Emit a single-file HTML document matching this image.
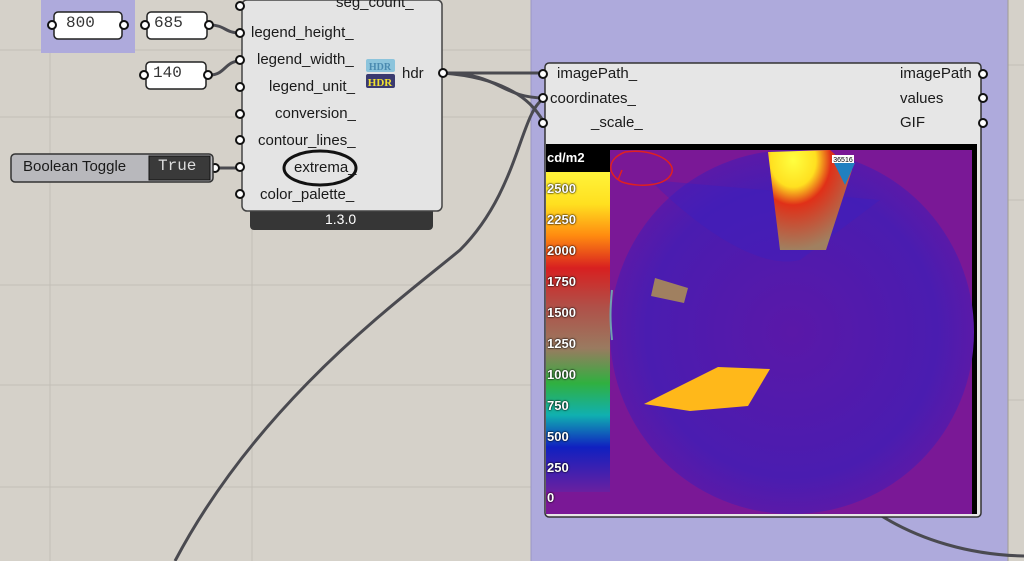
<!DOCTYPE html>
<html><head><meta charset="utf-8"><style>
html,body{margin:0;padding:0;width:1024px;height:561px;overflow:hidden;background:#d5d1c9;font-family:"Liberation Sans","DejaVu Sans",sans-serif}
.abs{position:absolute}
.t{position:absolute;font-size:15px;color:#1a1a1a;white-space:nowrap}
.lg{position:absolute;left:547px;font-size:13px;color:#fff;font-weight:bold;text-shadow:0 0 2px #000,0 0 1px #000}
</style></head><body>
<svg class="abs" style="left:0;top:0" width="1024" height="561">
<defs>
<linearGradient id="leg" x1="0" y1="0" x2="0" y2="1">
<stop offset="0" stop-color="#fff33a"/><stop offset="0.1" stop-color="#ffe020"/>
<stop offset="0.2" stop-color="#ff8a10"/><stop offset="0.3" stop-color="#d82020"/>
<stop offset="0.42" stop-color="#b05048"/><stop offset="0.55" stop-color="#9a7a60"/>
<stop offset="0.66" stop-color="#30b040"/><stop offset="0.76" stop-color="#10b0b0"/>
<stop offset="0.86" stop-color="#1020c0"/><stop offset="1" stop-color="#6a20a0"/>
</linearGradient>
<radialGradient id="circ" cx="0.5" cy="0.5" r="0.5">
<stop offset="0" stop-color="#5a18a8"/><stop offset="0.8" stop-color="#4a1cb0"/><stop offset="1" stop-color="#5a1aa8"/>
</radialGradient>
<radialGradient id="sun" cx="0.3" cy="0.1" r="0.9">
<stop offset="0" stop-color="#ffff40"/><stop offset="0.3" stop-color="#ffe020"/><stop offset="0.5" stop-color="#e03018"/><stop offset="1" stop-color="#a08060"/>
</radialGradient>
</defs>
<g stroke="#c2beb6" stroke-width="1">
<line x1="0" y1="50" x2="531" y2="50"/><line x1="0" y1="117" x2="531" y2="117"/>
<line x1="0" y1="285" x2="531" y2="285"/><line x1="0" y1="385" x2="531" y2="385"/>
<line x1="0" y1="487" x2="531" y2="487"/>
<line x1="50" y1="0" x2="50" y2="561"/><line x1="252" y1="0" x2="252" y2="561"/>
<line x1="1008" y1="65" x2="1024" y2="65"/><line x1="1008" y1="200" x2="1024" y2="200"/><line x1="1008" y1="400" x2="1024" y2="400"/>
</g>
<rect x="531" y="0" width="477" height="561" fill="#aeaadc"/>
<line x1="531" y1="0" x2="531" y2="561" stroke="#9a96c4"/>
<rect x="41" y="0" width="94" height="53" fill="#aeaadc"/>
<line x1="1008" y1="0" x2="1008" y2="561" stroke="#a09c94"/>
<g fill="none" stroke="#4a4a50" stroke-width="3">
<path d="M210 25 C225 25 225 33 240 33"/>
<path d="M210 75 C225 75 225 61 240 61"/>
<path d="M215 168 L240 168"/>
<path d="M443 73 C490 73 500 73 545 73"/>
<path d="M443 73 C500 73 500 98 545 98"/>
<path d="M443 73 C530 80 540 120 545 123"/>
<path d="M175 561 C260 400 400 300 460 250 C520 190 520 110 545 98"/>
<path d="M880 515 C920 540 970 555 1024 556"/>
</g>
<!-- HDR component body -->
<rect x="250" y="195" width="183" height="35" rx="4" fill="#363636"/>
<rect x="242" y="0" width="200" height="211" rx="5" fill="#e4e4e4" stroke="#444" stroke-width="1.5"/>
<g fill="#fff" stroke="#111" stroke-width="2">
<circle cx="240" cy="6" r="4"/><circle cx="240" cy="33" r="4"/><circle cx="240" cy="60" r="4"/><circle cx="240" cy="87" r="4"/>
<circle cx="240" cy="114" r="4"/><circle cx="240" cy="140" r="4"/><circle cx="240" cy="167" r="4"/><circle cx="240" cy="194" r="4"/>
<circle cx="443" cy="73" r="4"/>
</g>
<ellipse cx="320" cy="168" rx="36" ry="17" fill="none" stroke="#111" stroke-width="3"/>
<rect x="366" y="59" width="29" height="13" rx="2" fill="#8cc4dc"/>
<rect x="366" y="74" width="29" height="14" rx="2" fill="#3a3a70"/>
<text x="380" y="70" font-size="10" font-weight="bold" fill="#4a8ab0" text-anchor="middle" font-family="Liberation Serif,serif">HDR</text>
<text x="380" y="86" font-size="11" font-weight="bold" fill="#f0e030" text-anchor="middle" font-family="Liberation Serif,serif">HDR</text>
<!-- number sliders -->
<g stroke="#222" stroke-width="1.5" fill="#fff">
<rect x="54" y="12" width="68" height="27" rx="4"/>
<rect x="147" y="12" width="60" height="27" rx="4"/>
<rect x="146" y="62" width="60" height="27" rx="4"/>
</g>
<g fill="#fff" stroke="#111" stroke-width="2">
<circle cx="52" cy="25" r="4"/><circle cx="124" cy="25" r="4"/><circle cx="145" cy="25" r="4"/><circle cx="209" cy="25" r="4"/>
<circle cx="144" cy="75" r="4"/><circle cx="208" cy="75" r="4"/><circle cx="215" cy="168" r="4"/>
</g>
<!-- boolean toggle -->
<rect x="11" y="154" width="202" height="28" rx="4" fill="#b8b8bc" stroke="#333" stroke-width="1.5"/>
<rect x="149" y="156" width="61" height="24" fill="#3a3a3a" stroke="#111"/>
<!-- viewer component -->
<rect x="545" y="63" width="436" height="454" rx="4" fill="#e6e6e6" stroke="#333" stroke-width="1.5"/>
<g fill="#fff" stroke="#111" stroke-width="2">
<circle cx="543" cy="74" r="4"/><circle cx="543" cy="98" r="4"/><circle cx="543" cy="123" r="4"/>
<circle cx="983" cy="74" r="4"/><circle cx="983" cy="98" r="4"/><circle cx="983" cy="123" r="4"/>
</g>
<rect x="546" y="144" width="431" height="370" fill="#7a1896"/>
<rect x="546" y="144" width="431" height="6" fill="#000"/>
<rect x="972" y="144" width="5" height="370" fill="#000"/>
<rect x="546" y="144" width="64" height="28" fill="#000"/>
<rect x="546" y="172" width="64" height="320" fill="url(#leg)"/>
<circle cx="792" cy="332" r="182" fill="url(#circ)"/>
<path d="M650 180 C700 230 760 270 800 260 L880 200 Z" fill="#3a20c0" opacity="0.4"/>
<polygon points="768,152 830,150 852,170 826,250 780,250" fill="url(#sun)"/>
<polygon points="834,163 855,163 845,185" fill="#2080c0"/>
<polygon points="655,278 688,288 684,303 651,296" fill="#a08060"/>
<polygon points="644,404 718,367 770,369 748,406 690,411" fill="#ffb81a"/>
<path d="M612 290 C610 310 610 320 612 340" stroke="#70a0b0" stroke-width="2" fill="none"/>
<path d="M625 152 C650 148 675 160 672 172 C668 186 640 188 622 182 C608 175 605 160 625 152 M618 180 L622 170" stroke="#e02020" stroke-width="1.5" fill="none"/>
<rect x="832" y="155" width="22" height="8" fill="#fff"/>
<text x="843" y="162" font-size="7" text-anchor="middle" fill="#000">36516</text>
</svg>
<div class="t" style="left:336px;top:-6px">seg_count_</div>
<div class="t" style="left:251px;top:24px">legend_height_</div>
<div class="t" style="left:257px;top:51px">legend_width_</div>
<div class="t" style="left:269px;top:78px">legend_unit_</div>
<div class="t" style="left:275px;top:105px">conversion_</div>
<div class="t" style="left:258px;top:132px">contour_lines_</div>
<div class="t" style="left:294px;top:159px">extrema_</div>
<div class="t" style="left:260px;top:186px">color_palette_</div>
<div class="t" style="left:402px;top:65px">hdr</div>
<div class="t" style="left:325px;top:211px;color:#fff;font-size:14px">1.3.0</div>
<div class="t" style="left:66px;top:14px;font-family:'Liberation Mono',monospace;font-size:16px;color:#333">800</div>
<div class="t" style="left:154px;top:14px;font-family:'Liberation Mono',monospace;font-size:16px;color:#333">685</div>
<div class="t" style="left:153px;top:64px;font-family:'Liberation Mono',monospace;font-size:16px;color:#333">140</div>
<div class="t" style="left:23px;top:158px">Boolean Toggle</div>
<div class="t" style="left:158px;top:157px;font-family:'Liberation Mono',monospace;font-size:16px;color:#ddd">True</div>
<div class="t" style="left:557px;top:65px">imagePath_</div>
<div class="t" style="left:550px;top:90px">coordinates_</div>
<div class="t" style="left:591px;top:114px">_scale_</div>
<div class="t" style="left:900px;top:65px">imagePath</div>
<div class="t" style="left:900px;top:90px">values</div>
<div class="t" style="left:900px;top:114px">GIF</div>
<div class="lg" style="top:150px">cd/m2</div>
<div class="lg" style="top:181px">2500</div>
<div class="lg" style="top:212px">2250</div>
<div class="lg" style="top:243px">2000</div>
<div class="lg" style="top:274px">1750</div>
<div class="lg" style="top:305px">1500</div>
<div class="lg" style="top:336px">1250</div>
<div class="lg" style="top:367px">1000</div>
<div class="lg" style="top:398px">750</div>
<div class="lg" style="top:429px">500</div>
<div class="lg" style="top:460px">250</div>
<div class="lg" style="top:490px">0</div>
</body></html>
